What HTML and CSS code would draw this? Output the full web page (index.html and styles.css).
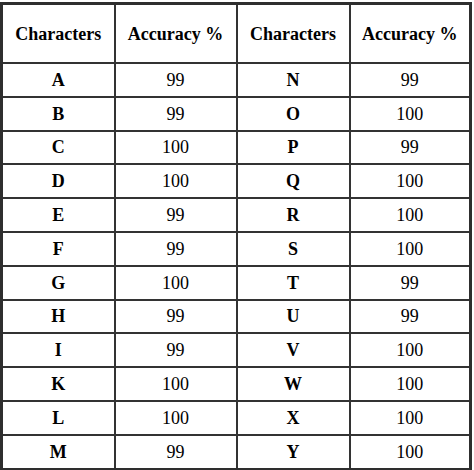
FILE: index.html
```html
<!DOCTYPE html>
<html>
<head>
<meta charset="utf-8">
<link rel="stylesheet" href="styles.css">
</head>
<body>
<table class="acc">
  <colgroup>
    <col class="c1"><col class="c2"><col class="c3"><col class="c4">
  </colgroup>
  <thead>
    <tr class="head"><th>Characters</th><th>Accuracy %</th><th>Characters</th><th>Accuracy %</th></tr>
  </thead>
  <tbody>
    <tr><th>A</th><td>99</td><th>N</th><td>99</td></tr>
    <tr><th>B</th><td>99</td><th>O</th><td>100</td></tr>
    <tr><th>C</th><td>100</td><th>P</th><td>99</td></tr>
    <tr><th>D</th><td>100</td><th>Q</th><td>100</td></tr>
    <tr><th>E</th><td>99</td><th>R</th><td>100</td></tr>
    <tr><th>F</th><td>99</td><th>S</th><td>100</td></tr>
    <tr><th>G</th><td>100</td><th>T</th><td>99</td></tr>
    <tr><th>H</th><td>99</td><th>U</th><td>99</td></tr>
    <tr><th>I</th><td>99</td><th>V</th><td>100</td></tr>
    <tr><th>K</th><td>100</td><th>W</th><td>100</td></tr>
    <tr><th>L</th><td>100</td><th>X</th><td>100</td></tr>
    <tr><th>M</th><td>99</td><th>Y</th><td>100</td></tr>
  </tbody>
</table>
</body>
</html>
```
FILE: styles.css
```css
html, body {
  margin: 0;
  padding: 0;
  background: #fff;
}
body {
  padding-top: 2px;
  font-family: "Liberation Serif", "Times New Roman", serif;
  color: #000;
}
.acc {
  border-collapse: collapse;
  width: 471px;
  table-layout: fixed;
  border: 3px solid #2e2e2e;
  font-size: 18px;
}
.c1 { width: 113px; }
.c2 { width: 122px; }
.c3 { width: 113px; }
.c4 { width: 121px; }
.acc th, .acc td {
  border: 2px solid #333;
  text-align: center;
  vertical-align: middle;
  padding: 0;
  height: 31.8px;
  line-height: 20px;
}
.acc th { font-weight: bold; }
.acc td { font-weight: normal; }
.acc .head th { height: 57px; }
```
